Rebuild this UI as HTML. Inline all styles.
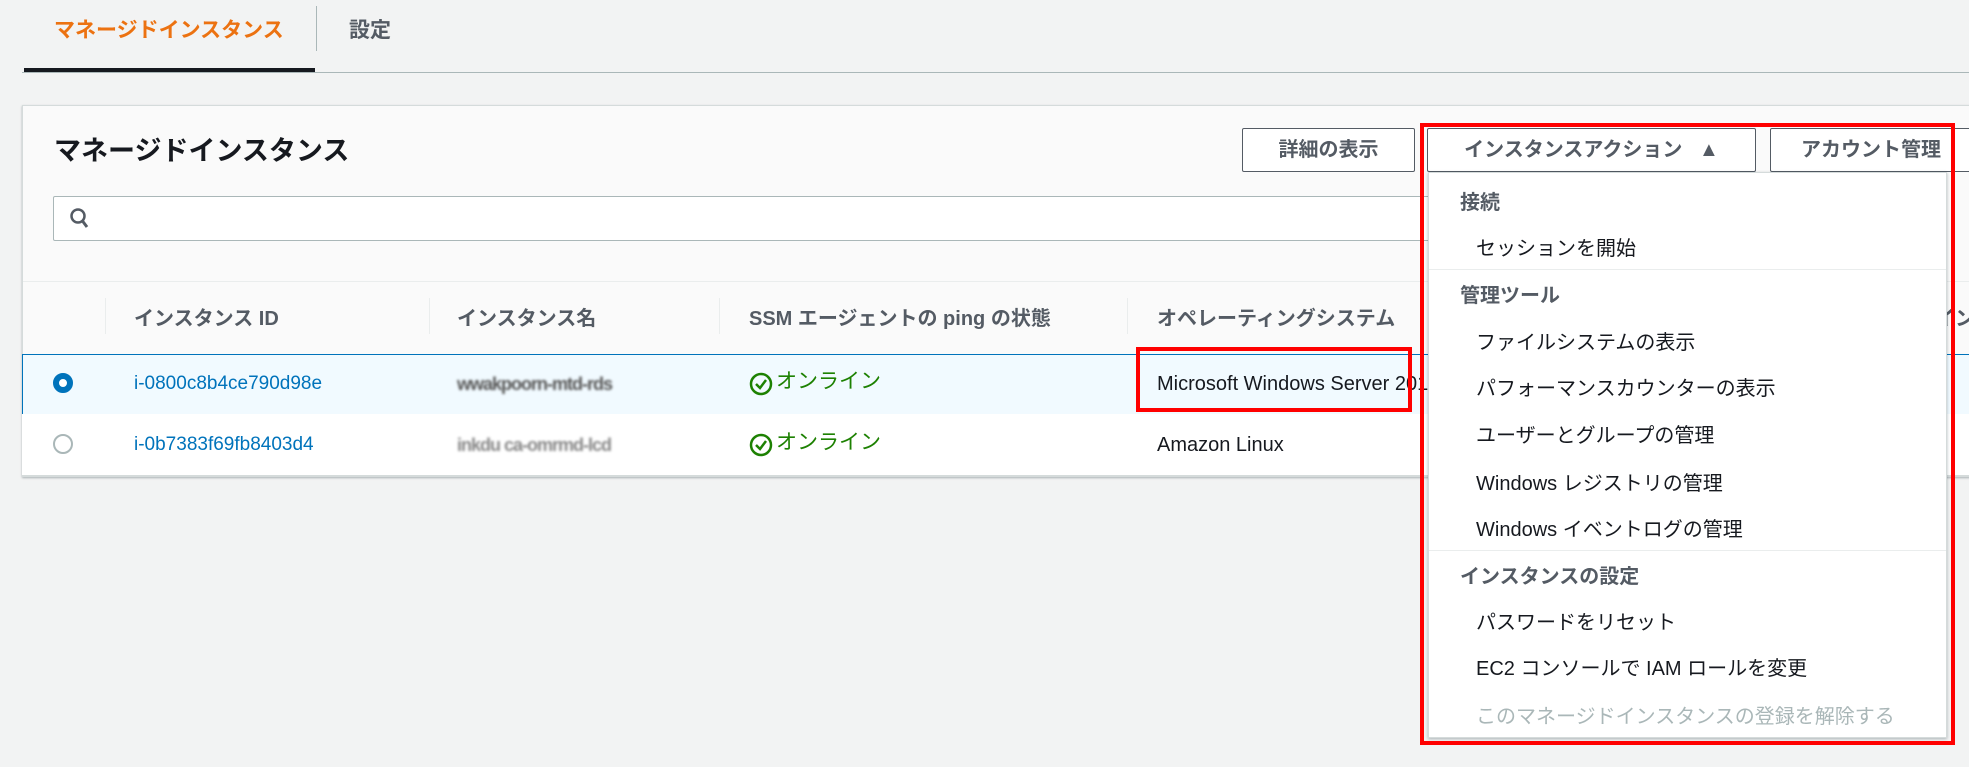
<!DOCTYPE html>
<html><head><meta charset="utf-8"><style>
*{box-sizing:border-box;margin:0;padding:0}
body{width:1969px;height:767px;background:#f2f3f3;font-family:"Liberation Sans","Noto Sans CJK JP",sans-serif;position:relative;overflow:hidden;color:#16191f}
.a{position:absolute;white-space:nowrap}
.tab{font-size:21px;font-weight:bold;top:14px}
.panel{position:absolute;left:22px;top:105px;width:2000px;height:372px;background:#fafafa;border:1px solid #d5dbdb;box-shadow:0 1px 2px rgba(0,28,36,.3)}
.btn{position:absolute;top:128px;height:44px;border:1px solid #545b64;border-radius:2px;background:#fff;color:#545b64;font-weight:bold;font-size:20px;line-height:42px;text-align:center;white-space:nowrap;overflow:hidden}
.th{font-size:20px;font-weight:bold;color:#545b64;top:302px}
.sep{position:absolute;width:1px;background:#eaeded;top:298px;height:36px}
.td{font-size:19px;line-height:24px}
.link{color:#0073bb}
.ok{color:#1d8102}
.menu{position:absolute;left:1428px;top:172px;width:519px;height:566px;background:#fff;border:1px solid #d5dbdb;box-shadow:0 1px 3px rgba(0,28,36,.3)}
.mh{position:absolute;left:31px;font-size:20px;font-weight:bold;color:#545b64}
.mi{position:absolute;left:47px;font-size:20px;color:#16191f}
.hr{position:absolute;left:0;width:100%;height:1px;background:#eaeded}
.red{position:absolute;border:4px solid #f00}
.blur{filter:blur(1.2px);color:#555;letter-spacing:-1px;font-size:18px;font-weight:bold}
</style></head><body>
<div class="a tab" style="left:54px;color:#ec7211">マネージドインスタンス</div>
<div class="a" style="left:316px;top:6px;width:1px;height:45px;background:#aab7b8"></div>
<div class="a tab" style="left:349px;color:#545b64">設定</div>
<div class="a" style="left:22px;top:72px;width:1960px;height:1px;background:#aab7b8"></div>
<div class="a" style="left:24px;top:68px;width:291px;height:4px;background:#16191f"></div>

<div class="panel"></div>
<div class="a" style="left:54px;top:129px;font-size:27px;font-weight:bold">マネージドインスタンス</div>
<div class="btn" style="left:1242px;width:173px">詳細の表示</div>
<div class="btn" style="left:1427px;width:329px">インスタンスアクション&nbsp;&nbsp;&nbsp;▲</div>
<div class="btn" style="left:1770px;width:230px;text-align:left;padding-left:30px">アカウント管理</div>

<div class="a" style="left:53px;top:196px;width:1400px;height:45px;background:#fff;border:1px solid #aab7b8;border-radius:2px"></div>
<svg class="a" style="left:69px;top:207px" width="22" height="24" viewBox="0 0 22 24"><circle cx="9" cy="9" r="6.5" fill="none" stroke="#545b64" stroke-width="2.5"/><line x1="13.5" y1="14" x2="18" y2="20" stroke="#545b64" stroke-width="3"/></svg>

<div class="a" style="left:23px;top:281px;width:1960px;height:1px;background:#eaeded"></div>
<div class="sep" style="left:105px"></div><div class="sep" style="left:429px"></div><div class="sep" style="left:719px"></div><div class="sep" style="left:1127px"></div>
<div class="a th" style="left:134px">インスタンス ID</div>
<div class="a th" style="left:457px">インスタンス名</div>
<div class="a th" style="left:749px">SSM エージェントの ping の状態</div>
<div class="a th" style="left:1157px">オペレーティングシステム</div>
<div class="a th" style="left:1935px">イン</div>

<div class="a" style="left:22px;top:354px;width:1960px;height:61px;background:#f1faff;border:1px solid #0073bb;border-right:none"></div>
<div class="a" style="left:22px;top:414px;width:1960px;height:62px;background:#fff;border-bottom:1px solid #d5dbdb"></div>
<div class="a" style="left:53px;top:373px;width:20px;height:20px;border-radius:50%;border:6px solid #0073bb;background:#fff"></div>
<div class="a" style="left:53px;top:434px;width:20px;height:20px;border-radius:50%;border:2px solid #aab7b8;background:#fff"></div>
<div class="a td link" style="left:134px;top:372px">i-0800c8b4ce790d98e</div>
<div class="a td link" style="left:134px;top:433px">i-0b7383f69fb8403d4</div>
<div class="a td blur" style="left:457px;top:372px">wwakpoorn-mtd-rds</div>
<div class="a td blur" style="left:457px;top:433px;color:#888">inkdu ca-omrmd-lcd</div>
<svg class="a" style="left:749px;top:372px" width="24" height="24"><circle cx="12" cy="12" r="10" fill="none" stroke="#1d8102" stroke-width="2.5"/><path d="M7 12l4 4 6-8" fill="none" stroke="#1d8102" stroke-width="2.5"/></svg>
<div class="a td ok" style="left:776px;top:370px;font-size:21px">オンライン</div>
<svg class="a" style="left:749px;top:433px" width="24" height="24"><circle cx="12" cy="12" r="10" fill="none" stroke="#1d8102" stroke-width="2.5"/><path d="M7 12l4 4 6-8" fill="none" stroke="#1d8102" stroke-width="2.5"/></svg>
<div class="a td ok" style="left:776px;top:431px;font-size:21px">オンライン</div>
<div class="a td" style="left:1157px;top:372px;font-size:20px">Microsoft Windows Server 2019</div>
<div class="a td" style="left:1157px;top:433px;font-size:20px">Amazon Linux</div>
<div class="red" style="left:1136px;top:347px;width:276px;height:65px"></div>

<div class="menu">
<div class="mh" style="top:13px">接続</div>
<div class="mi" style="top:59px">セッションを開始</div>
<div class="hr" style="top:96px"></div>
<div class="mh" style="top:106px">管理ツール</div>
<div class="mi" style="top:153px">ファイルシステムの表示</div>
<div class="mi" style="top:199px">パフォーマンスカウンターの表示</div>
<div class="mi" style="top:246px">ユーザーとグループの管理</div>
<div class="mi" style="top:294px">Windows レジストリの管理</div>
<div class="mi" style="top:340px">Windows イベントログの管理</div>
<div class="hr" style="top:377px"></div>
<div class="mh" style="top:387px">インスタンスの設定</div>
<div class="mi" style="top:433px">パスワードをリセット</div>
<div class="mi" style="top:479px">EC2 コンソールで IAM ロールを変更</div>
<div class="mi" style="top:527px;color:#aab7b8">このマネージドインスタンスの登録を解除する</div>
</div>
<div class="red" style="left:1420px;top:123px;width:535px;height:622px"></div>
</body></html>
